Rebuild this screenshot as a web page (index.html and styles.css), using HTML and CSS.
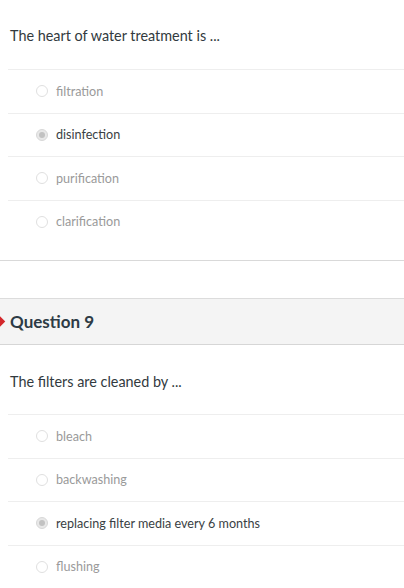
FILE: index.html
```html
<!DOCTYPE html>
<html>
<head>
<meta charset="utf-8">
<link rel="stylesheet" href="styles.css">
</head>
<body>
<section class="question first">
  <div class="qtext">The heart of water treatment is ...</div>
  <ul class="answers">
    <li class="answer"><span class="radio"></span><span class="label">filtration</span></li>
    <li class="answer selected"><span class="radio"></span><span class="label">disinfection</span></li>
    <li class="answer"><span class="radio"></span><span class="label">purification</span></li>
    <li class="answer"><span class="radio"></span><span class="label">clarification</span></li>
  </ul>
</section>
<section class="question second">
  <header class="qheader"><span class="flag"></span><h2 class="qtitle">Question 9</h2></header>
  <div class="qtext">The filters are cleaned by ...</div>
  <ul class="answers">
    <li class="answer"><span class="radio"></span><span class="label">bleach</span></li>
    <li class="answer"><span class="radio"></span><span class="label">backwashing</span></li>
    <li class="answer selected"><span class="radio"></span><span class="label">replacing filter media every 6 months</span></li>
    <li class="answer"><span class="radio"></span><span class="label">flushing</span></li>
  </ul>
</section>
</body>
</html>
```
FILE: styles.css
```css
html, body {
  margin: 0;
  padding: 0;
  background: #fff;
  font-family: Lato, "Open Sans", sans-serif;
  color: #2d3b45;
  overflow: hidden;
}
.question.first {
  padding-bottom: 17px;
  border-bottom: 1px solid #d9d9d9;
}
.qtext {
  font-size: 14.4px;
  line-height: 20px;
  padding: 26px 10px 23px;
  color: #323a40;
}
.second .qtext {
  padding: 27px 10px 22px;
}
.answers {
  list-style: none;
  margin: 0 0 0 8px;
  padding: 0;
}
.answer {
  box-sizing: border-box;
  height: 43.5px;
  border-top: 1px solid #eeeeee;
  display: flex;
  align-items: center;
  padding-left: 28px;
  gap: 8px;
  font-size: 12.6px;
  color: #9a9a9a;
}
.answer.selected {
  color: #3a3f44;
}
.radio {
  width: 12px;
  height: 12px;
  border: 1px solid #e0e0e0;
  border-radius: 50%;
  box-sizing: border-box;
  display: flex;
  align-items: center;
  justify-content: center;
  background: #fff;
}
.selected .radio {
  background: #e8e8e8;
  border-color: #d8d8d8;
}
.selected .radio::after {
  content: "";
  width: 6px;
  height: 6px;
  border-radius: 50%;
  background: #c2c2c2;
}
.second {
  margin-top: 37px;
}
.qheader {
  position: relative;
  box-sizing: border-box;
  height: 47px;
  background: #f4f4f4;
  border-top: 1px solid #dcdcdc;
  border-bottom: 1px solid #d6d6d6;
  display: flex;
  align-items: center;
  padding-left: 10px;
}
.flag {
  position: absolute;
  left: -8px;
  top: 17px;
  width: 11px;
  height: 11px;
  background: #d3272b;
  transform: rotate(45deg);
}
.qtitle {
  margin: 0;
  font-size: 17px;
  font-weight: 700;
  color: #2d3b45;
}
```
